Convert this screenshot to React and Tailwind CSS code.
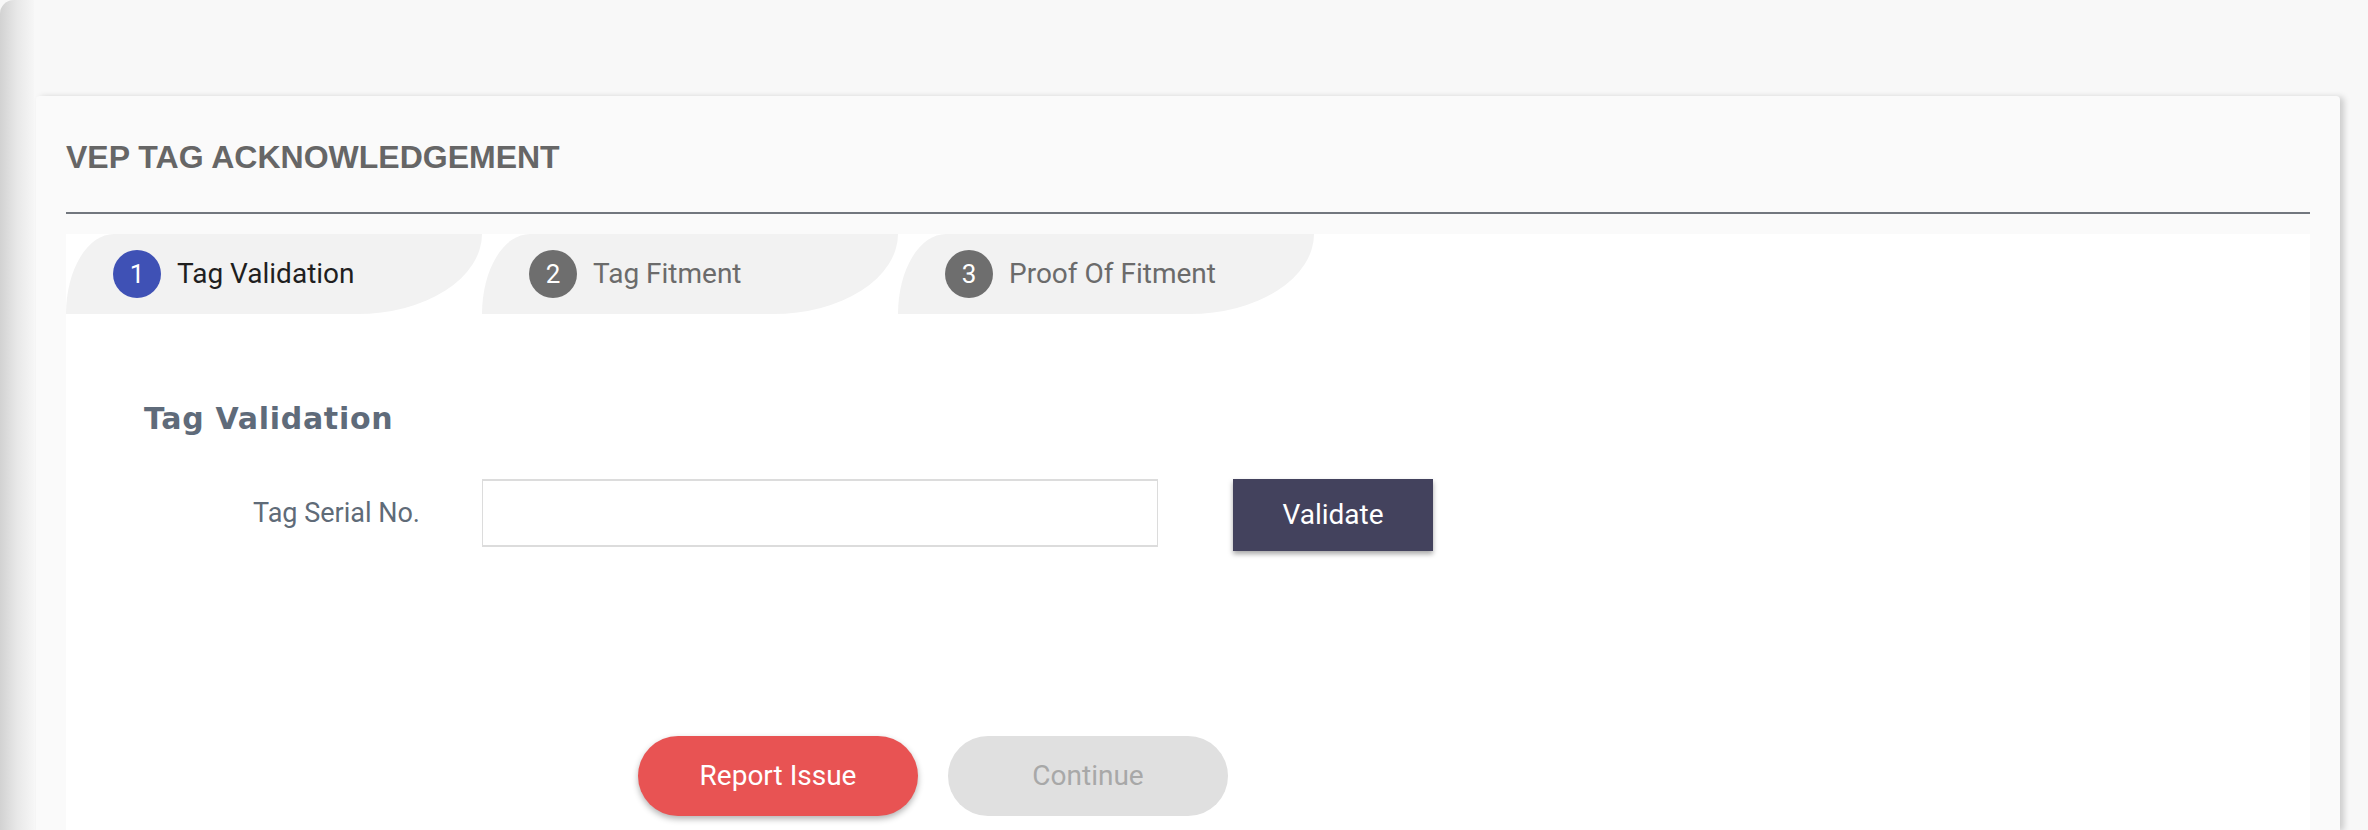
import React, { useState } from 'react';

const steps = [
    { n: 1, label: 'Tag Validation' },
    { n: 2, label: 'Tag Fitment' },
    { n: 3, label: 'Proof Of Fitment' },
];

const App = () => {
    const [active] = useState(1);
    const [serial, setSerial] = useState('');

    return (
        <div className="h-[830px] w-full overflow-hidden bg-[#f8f8f8] flex font-['Roboto',sans-serif]">
            {/* edge of the panel on the left */}
            <div className="w-[34px] shrink-0 rounded-tl-[14px] bg-linear-to-r from-[#d2d2d2] via-[#e8e8e8] to-[#f6f6f6]" />

            <div className="flex-1 pl-[2px] pr-[28px] pt-[96px] flex flex-col">
                <div className="flex-1 bg-[#fafafa] rounded-t-[4px] shadow-[4px_1px_6px_rgba(0,0,0,0.18)] px-[30px] pt-[41px] flex flex-col">
                    <h1 className="font-['Liberation_Sans',Arial,sans-serif] font-bold text-[32px] leading-[40px] text-[#666666]">
                        VEP TAG ACKNOWLEDGEMENT
                    </h1>
                    <div className="mt-[35px] h-[2px] bg-[#72777e]" />

                    <div className="mt-[20px] flex-1 bg-white flex flex-col">
                        {/* stepper tabs */}
                        <div className="flex">
                            {steps.map((s) => (
                                <div
                                    key={s.n}
                                    className="w-[416px] h-[80px] bg-[#f2f2f2] rounded-tl-[48px_80px] rounded-br-[125px_80px] flex items-center pl-[47px]"
                                >
                                    <div
                                        className={`w-[48px] h-[48px] rounded-full flex items-center justify-center text-white text-[26px] ${s.n === active ? 'bg-[#3f51b5]' : 'bg-[#6e6e6e]'}`}
                                    >
                                        {s.n}
                                    </div>
                                    <span className={`ml-[16px] text-[28px] ${s.n === active ? 'text-[#1f1f1f]' : 'text-[#6b6b6b]'}`}>
                                        {s.label}
                                    </span>
                                </div>
                            ))}
                        </div>

                        <h2 className="mt-[87px] ml-[78px] font-['DejaVu_Sans',sans-serif] font-bold text-[30px] tracking-[0.7px] leading-[36px] text-[#5f6b7a]">
                            Tag Validation
                        </h2>

                        <div className="mt-[42px] flex items-start">
                            <label className="w-[354px] h-[68px] flex items-center justify-end text-[27px] text-[#5f6b78]">
                                Tag Serial No.
                            </label>
                            <input
                                type="text"
                                value={serial}
                                onChange={(e) => setSerial(e.target.value)}
                                className="ml-[62px] w-[676px] h-[68px] border border-y-2 border-[#dcdcdc] px-4 text-[26px] focus:outline-none"
                            />
                            <button className="ml-[75px] w-[200px] h-[72px] bg-[#43425d] text-white text-[28px] shadow-[0_3px_5px_rgba(0,0,0,0.35)]">
                                Validate
                            </button>
                        </div>

                        <div className="mt-[185px] ml-[572px] flex gap-[30px]">
                            <button className="w-[280px] h-[80px] rounded-full bg-[#e85353] text-white text-[28px] shadow-[0_3px_6px_rgba(0,0,0,0.3)]">
                                Report Issue
                            </button>
                            <button disabled className="w-[280px] h-[80px] rounded-full bg-[#e0e0e0] text-[#a8a8a8] text-[28px]">
                                Continue
                            </button>
                        </div>
                    </div>
                </div>
            </div>
        </div>
    );
};

export default App;
